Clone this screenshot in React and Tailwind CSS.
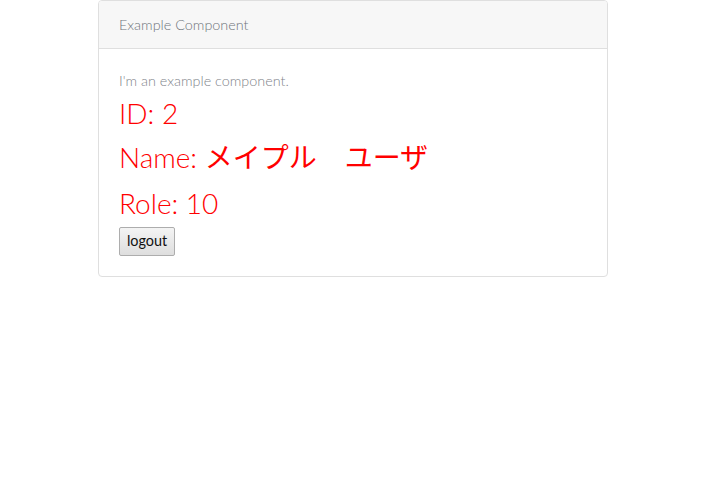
export default function App() {
  return (
    <div className="w-[705px] h-[497px] bg-white" style={{ fontFamily: "Lato, 'Noto Sans', sans-serif" }}>
      <div className="ml-[98px] w-[510px] rounded-[4px] border border-[#dfdfdf] overflow-hidden">
        <div className="h-[48px] bg-[#f7f7f7] border-b border-[#dfdfdf] px-[20px] flex items-center text-[14.4px] font-light text-[#6f757b]">
          Example Component
        </div>
        <div className="px-[20px] pt-[20px] pb-[20px]">
          <div className="text-[14.4px] leading-[23px] font-light text-[#7f848a]">I'm an example component.</div>
          <h3
            className="text-[28px] leading-[36px] font-light text-[#ff0000] pt-[3px] mb-[8px]"
            style={{ fontFamily: "Lato, 'Noto Sans CJK JP', sans-serif" }}
          >
            ID: 2
          </h3>
          <h3
            className="text-[28px] leading-[36px] font-light text-[#ff0000] mb-[10px]"
            style={{ fontFamily: "Lato, 'Noto Sans CJK JP', sans-serif" }}
          >
            Name: <span className="font-normal">メイプル　ユーザ</span>
          </h3>
          <h3
            className="text-[28px] leading-[36px] font-light text-[#ff0000] mb-[6px]"
            style={{ fontFamily: "Lato, 'Noto Sans CJK JP', sans-serif" }}
          >
            Role: 10
          </h3>
          <button className="h-[29px] w-[56px] border border-[#adadad] rounded-[2px] bg-gradient-to-b from-[#f4f4f4] to-[#dedede] text-[14.4px] text-[#111] flex items-center justify-center pb-[1px]">
            logout
          </button>
        </div>
      </div>
    </div>
  );
}
